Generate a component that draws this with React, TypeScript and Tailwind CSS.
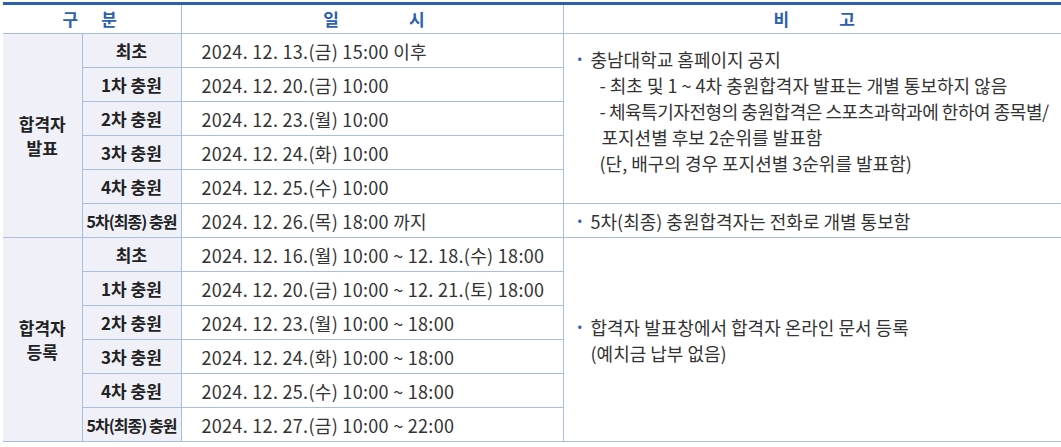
const line = "border border-[#a9bde2]";

const announce = [
  { label: "최초", date: "2024. 12. 13.(금) 15:00 이후" },
  { label: "1차 충원", date: "2024. 12. 20.(금) 10:00" },
  { label: "2차 충원", date: "2024. 12. 23.(월) 10:00" },
  { label: "3차 충원", date: "2024. 12. 24.(화) 10:00" },
  { label: "4차 충원", date: "2024. 12. 25.(수) 10:00" },
];

const register = [
  { label: "최초", date: "2024. 12. 16.(월) 10:00 ~ 12. 18.(수) 18:00" },
  { label: "1차 충원", date: "2024. 12. 20.(금) 10:00 ~ 12. 21.(토) 18:00" },
  { label: "2차 충원", date: "2024. 12. 23.(월) 10:00 ~ 18:00" },
  { label: "3차 충원", date: "2024. 12. 24.(화) 10:00 ~ 18:00" },
  { label: "4차 충원", date: "2024. 12. 25.(수) 10:00 ~ 18:00" },
  { label: "5차(최종) 충원", date: "2024. 12. 27.(금) 10:00 ~ 22:00" },
];

const Label = ({ text }: { text: string }) => (
  <td
    className={`${line} bg-[#eff0f8] text-center font-bold text-[#222] whitespace-nowrap ${
      text.length > 6 ? "tracking-[-0.06em] text-[16px]" : "text-[17px]"
    }`}
  >
    {text}
  </td>
);

const DateCell = ({ text }: { text: string }) => (
  <td className={`${line} pl-[20px] text-[18px] tracking-[0.3px] text-[#333] whitespace-nowrap`}>{text}</td>
);

const Bullet = () => <span className="absolute left-[-13px] top-[-1px] text-[#2c5eb1] text-[13px]">•</span>;

export default function App() {
  return (
    <div
      className="w-[1061px] h-[447px] bg-white pt-[2px] pl-[3px] overflow-hidden"
      style={{ fontFamily: '"Noto Sans CJK KR", "Noto Sans", sans-serif' }}
    >
      <table className="border-collapse table-fixed w-[1058px] leading-[26px]">
        <colgroup>
          <col className="w-[79px]" />
          <col className="w-[99px]" />
          <col className="w-[382px]" />
          <col />
        </colgroup>
        <thead>
          <tr className="h-[30px] text-[#2c5eb1] text-[17px] font-bold">
            <th colSpan={2} className="border-t-[3px] border-t-[#2c5eb1] border-b border-b-[#a9bde2] border-r border-r-[#a9bde2]">
              <div className="flex justify-center gap-[23px] pr-[4px]">
                <span>구</span>
                <span>분</span>
              </div>
            </th>
            <th className="border-t-[3px] border-t-[#2c5eb1] border-b border-b-[#a9bde2] border-r border-r-[#a9bde2]">
              <div className="flex justify-center gap-[70px] pl-[4px]">
                <span>일</span>
                <span>시</span>
              </div>
            </th>
            <th className="border-t-[3px] border-t-[#2c5eb1] border-b border-b-[#a9bde2]">
              <div className="flex justify-center gap-[50px] pl-[4px]">
                <span>비</span>
                <span>고</span>
              </div>
            </th>
          </tr>
        </thead>
        <tbody>
          {announce.map((r, i) => (
            <tr key={r.label} className="h-[34px]">
              {i === 0 && (
                <td rowSpan={6} className="border-b border-b-[#a9bde2] border-r border-r-[#a9bde2] bg-[#eff0f8] text-center font-bold text-[17px] text-[#222] leading-[24px]">
                  합격자
                  <br />
                  발표
                </td>
              )}
              <Label text={r.label} />
              <DateCell text={r.date} />
              {i === 0 && (
                <td rowSpan={5} className="border-y border-[#a9bde2] pl-[27px] pb-[15px] text-[18px] text-[#333] align-middle whitespace-nowrap">
                  <div className="relative">
                    <Bullet />
                    충남대학교 홈페이지 공지
                  </div>
                  <div className="pl-[9px]">- 최초 및 1 ~ 4차 충원합격자 발표는 개별 통보하지 않음</div>
                  <div className="pl-[9px] tracking-[-0.45px]">- 체육특기자전형의 충원합격은 스포츠과학과에 한하여 종목별/</div>
                  <div className="pl-[11px]">포지션별 후보 2순위를 발표함</div>
                  <div className="pl-[9px]">(단, 배구의 경우 포지션별 3순위를 발표함)</div>
                </td>
              )}
            </tr>
          ))}
          <tr className="h-[34px]">
            <Label text="5차(최종) 충원" />
            <DateCell text="2024. 12. 26.(목) 18:00 까지" />
            <td className="border-y border-[#a9bde2] pl-[27px] text-[18px] text-[#333]">
              <div className="relative">
                <Bullet />
                5차(최종) 충원합격자는 전화로 개별 통보함
              </div>
            </td>
          </tr>
          {register.map((r, i) => (
            <tr key={r.label} className="h-[34px]">
              {i === 0 && (
                <td rowSpan={6} className="border-b border-b-[#a9bde2] border-r border-r-[#a9bde2] bg-[#eff0f8] text-center font-bold text-[17px] text-[#222] leading-[24px]">
                  합격자
                  <br />
                  등록
                </td>
              )}
              <Label text={r.label} />
              <DateCell text={r.date} />
              {i === 0 && (
                <td rowSpan={6} className="border-y border-[#a9bde2] pl-[27px] text-[18px] text-[#333] align-middle">
                  <div className="relative">
                    <Bullet />
                    합격자 발표창에서 합격자 온라인 문서 등록
                  </div>
                  <div>(예치금 납부 없음)</div>
                </td>
              )}
            </tr>
          ))}
        </tbody>
      </table>
    </div>
  );
}
